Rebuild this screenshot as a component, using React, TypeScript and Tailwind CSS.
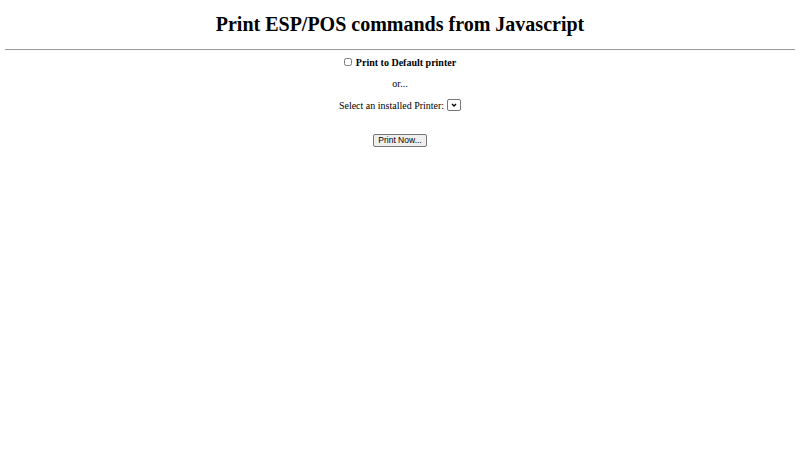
import { useState } from 'react'

export default function App() {

    const [useDefault, setUseDefault] = useState<boolean>(false)
    const [printer, setPrinter] = useState<string>('')

    return (
        <div className="w-full min-h-[450px] bg-white text-black text-[10px]" style={{ fontFamily: '"Liberation Serif", "Times New Roman", serif' }}>
            <div className="flex flex-col items-center pt-[12px]">
                <h1 className="text-[20px] leading-[24px] font-bold">Print ESP/POS commands from Javascript</h1>
            </div>
            <div className="px-[5px] mt-[13px]">
                <div className="h-[2px] border-t border-[#9a9a9a] border-b-[#eeeeee]"></div>
            </div>
            <div className="flex flex-col items-center">
                <label className="flex flex-row items-center gap-[4px] mt-[4px] h-[14px] font-bold">
                    <input type="checkbox" className="w-[8px] h-[8px] m-0" checked={useDefault} onChange={(e) => setUseDefault(e.target.checked)} />
                    <span>Print to Default printer</span>
                </label>
                <p className="mt-[8px] h-[14px] leading-[14px]">or...</p>
                <div className="flex flex-row items-center gap-[3px] mt-[7px] h-[14px]">
                    <span>Select an installed Printer:</span>
                    <div className="w-[14px] h-[12px] border border-[#767676] rounded-[2px] flex items-center justify-center bg-white">
                        <svg width="6" height="4" viewBox="0 0 6 4"><path d="M1 1 L3 3 L5 1" stroke="#000" strokeWidth="1.3" fill="none" /></svg>
                    </div>
                    <select className="hidden" value={printer} onChange={(e) => setPrinter(e.target.value)}></select>
                </div>
                <button className="mt-[22px] h-[13px] px-[4px] border border-[#767676] rounded-[2px] bg-[#efefef] text-[8.5px] leading-[11px] flex items-center" style={{ fontFamily: '"Liberation Sans", Arial, sans-serif' }}>
                    Print Now...
                </button>
            </div>
        </div>
    )
}
